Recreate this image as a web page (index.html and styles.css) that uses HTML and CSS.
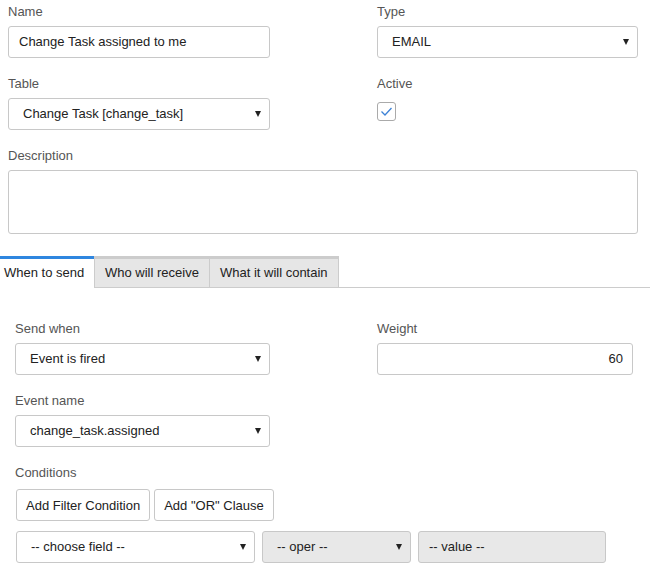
FILE: index.html
```html
<!DOCTYPE html>
<html lang="en">
<head>
    <meta charset="UTF-8">
    <meta name="viewport" content="width=device-width, initial-scale=1.0">
    <title>Notification - Change Task assigned to me</title>
    <link rel="stylesheet" href="styles.css">
</head>
<body>
    <div class="top-form">
        <div class="field">
            <label>Name</label>
            <div class="control">Change Task assigned to me</div>
        </div>
        <div class="field">
            <label>Type</label>
            <div class="control select">EMAIL</div>
        </div>
        <div class="field">
            <label>Table</label>
            <div class="control select">Change Task [change_task]</div>
        </div>
        <div class="field">
            <label>Active</label>
            <div class="checkbox">
                <svg width="17" height="17" viewBox="0 0 17 17">
                    <polyline points="3.5,8.5 7,12 13.5,5" fill="none" stroke="#3d82d6" stroke-width="1.3"/>
                </svg>
            </div>
        </div>
        <div class="field field-wide">
            <label>Description</label>
            <div class="control textarea"></div>
        </div>
    </div>

    <div class="tabs">
        <div class="tab active">When to send</div>
        <div class="tab">Who will receive</div>
        <div class="tab">What it will contain</div>
    </div>

    <div class="tab-panel">
        <div class="field">
            <label>Send when</label>
            <div class="control select">Event is fired</div>
        </div>
        <div class="field">
            <label>Weight</label>
            <div class="control number">60</div>
        </div>
        <div class="field">
            <label>Event name</label>
            <div class="control select">change_task.assigned</div>
        </div>
        <div class="field"></div>
        <div class="field field-wide">
            <label>Conditions</label>
            <div class="button-row">
                <button class="btn">Add Filter Condition</button>
                <button class="btn">Add "OR" Clause</button>
            </div>
            <div class="condition-row">
                <div class="control select choose-field">-- choose field --</div>
                <div class="control select disabled oper">-- oper --</div>
                <div class="control disabled value">-- value --</div>
            </div>
        </div>
    </div>
</body>
</html>
```

FILE: styles.css
```css
body {
    font-family: 'Liberation Sans', Arial, sans-serif;
    font-size: 13px;
    margin: 0;
    background-color: #fff;
    color: #333;
}

.top-form {
    display: grid;
    grid-template-columns: 262px 261px;
    column-gap: 107px;
    padding-left: 8px;
}
.field {
    padding-top: 3px;
    margin-bottom: 14px;
}
.field-wide {
    grid-column: 1 / -1;
}
.field label {
    display: block;
    line-height: 18px;
    margin-bottom: 5px;
    color: #555;
}

.control {
    position: relative;
    box-sizing: border-box;
    height: 32px;
    line-height: 30px;
    padding: 0 10px;
    border: 1px solid #c8c8c8;
    border-radius: 3px;
    background-color: #fff;
    color: #222;
    white-space: nowrap;
}
.control.select {
    padding-left: 14px;
}
.control.select::after {
    content: '';
    position: absolute;
    right: 8px;
    top: 12px;
    border-left: 3.5px solid transparent;
    border-right: 3.5px solid transparent;
    border-top: 6px solid #222;
}
.control.textarea {
    height: 64px;
    margin-top: 1px;
}
.control.number {
    text-align: right;
    padding-right: 9px;
}
.control.disabled {
    background-color: #e8e8e8;
}

.checkbox {
    box-sizing: border-box;
    width: 19px;
    height: 19px;
    margin-top: 9px;
    border: 1px solid #aaa;
    border-radius: 3px;
}
.checkbox svg {
    display: block;
}

.tabs {
    display: flex;
    margin-top: 8px;
    border-bottom: 1px solid #ccc;
}
.tab {
    box-sizing: border-box;
    height: 32px;
    line-height: 28px;
    padding: 0 10px;
    margin-bottom: -1px;
    background-color: #e6e6e6;
    border-top: 3px solid #ccc;
    border-left: 1px solid #ccc;
    border-bottom: 1px solid #ccc;
    color: #222;
}
.tab:last-child {
    border-right: 1px solid #ccc;
}
.tab.active {
    width: 94px;
    padding: 0 4px;
    background-color: #fff;
    border-top-color: #2f86df;
    border-left: none;
    border-bottom-color: #fff;
}

.tab-panel {
    display: grid;
    grid-template-columns: 255px 256px;
    column-gap: 107px;
    padding: 29px 0 0 15px;
}

.button-row {
    display: flex;
    gap: 4px;
    margin: 7px 0 10px 1px;
}
.btn {
    height: 32px;
    padding: 0 9px;
    font-family: inherit;
    font-size: 13px;
    color: #222;
    background-color: #fff;
    border: 1px solid #c8c8c8;
    border-radius: 3px;
}
.condition-row {
    display: flex;
    gap: 7px;
    margin-left: 1px;
}
.choose-field {
    width: 239px;
}
.oper {
    width: 149px;
}
.value {
    width: 188px;
}
```
